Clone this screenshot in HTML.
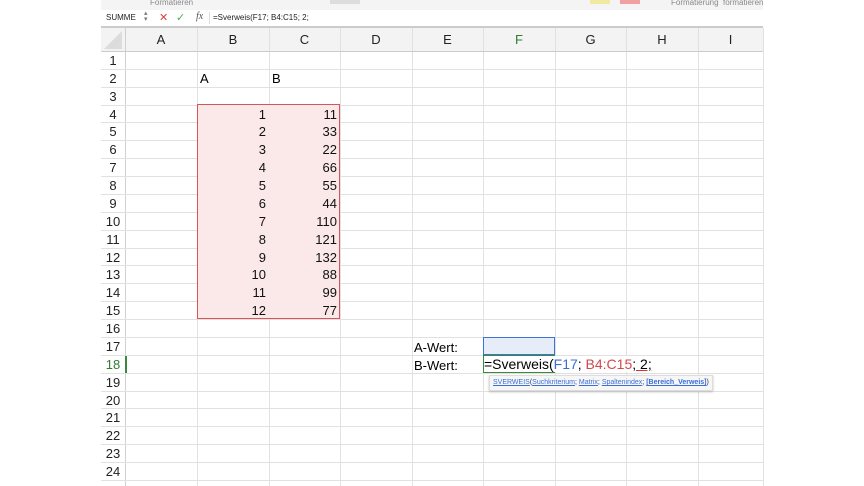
<!DOCTYPE html>
<html><head><meta charset="utf-8"><style>
body{margin:0;width:864px;height:486px;overflow:hidden;background:#fff;font-family:"Liberation Sans",sans-serif;position:relative}
.a{position:absolute}
.hl{position:absolute;height:1px;background:#e1e1e1}
.vl{position:absolute;width:1px;background:#e1e1e1}
.ch{position:absolute;top:28px;height:23px;line-height:24px;text-align:center;font-size:13px;color:#222}
.rh{position:absolute;left:101px;width:24px;text-align:center;font-size:13px;color:#222}
.n{position:absolute;text-align:right;font-size:13px;color:#111}
</style></head><body>
<div class="a" style="left:101px;top:0;width:662px;height:10px;background:#f4f4f4;border-bottom:1px solid #ddd"></div>
<div class="a" style="left:150px;top:-2px;font-size:8px;color:#888">Formatieren</div>
<div class="a" style="left:671px;top:-2px;font-size:8px;color:#888">Formatierung&nbsp; formatieren</div>
<div class="a" style="left:330px;top:0;width:30px;height:4px;background:#ddd"></div>
<div class="a" style="left:590px;top:0;width:20px;height:4px;background:#f2e9a0"></div>
<div class="a" style="left:620px;top:0;width:20px;height:4px;background:#f0a0a0"></div>
<div class="a" style="left:101px;top:10px;width:662px;height:16px;background:#fff"></div>
<div class="a" style="left:106px;top:13px;font-size:8px;color:#222">SUMME</div>
<div class="a" style="left:144px;top:11px;font-size:7px;color:#777;line-height:6px">▴<br>▾</div>
<div class="a" style="left:159px;top:11px;font-size:11px;color:#e04040">✕</div>
<div class="a" style="left:176px;top:11px;font-size:11px;color:#4cae4c">✓</div>
<div class="a" style="left:196px;top:11px;font-size:10px;font-style:italic;font-family:'Liberation Serif',serif;color:#555">fx</div>
<div class="a" style="left:209px;top:12px;width:1px;height:12px;background:#ddd"></div>
<div class="a" style="left:213px;top:13px;font-size:8px;color:#222">=Sverweis(F17; B4:C15; 2;</div>
<div class="a" style="left:101px;top:26px;width:662px;height:2px;background:#ccc"></div>
<div class="a" style="left:101px;top:28px;width:662px;height:23px;background:#f3f3f3"></div>
<div class="a" style="left:104px;top:31px;width:0;height:0;border-left:18px solid transparent;border-bottom:18px solid #dcdcdc"></div>
<div id="g"></div>
<div class="a" style="left:197px;top:104px;width:143px;height:215px;background:#fbe8e8;border:1px solid #d9535b;box-sizing:border-box"></div>
<div id="d"></div>
<div class="a" style="left:483px;top:337px;width:72px;height:18px;background:#e6ecf8;border:1px solid #3d73d6;box-sizing:border-box"></div>
<div class="a" style="left:483px;top:355px;width:72px;height:18px;border:1px solid #3a8a3a;box-sizing:border-box;background:#fff"></div>
<div class="a" style="left:414px;top:340px;font-size:13px">A-Wert:</div>
<div class="a" style="left:414px;top:358px;font-size:13px">B-Wert:</div>
<div class="a" style="left:484px;top:356px;font-size:14px;background:#fff;white-space:nowrap">=Sverweis(<span style="color:#3b6fd0">F17</span>; <span style="color:#d2474d">B4:C15</span><span style="text-decoration:underline;text-decoration-color:#e03030">; 2;</span></div>
<div class="a" style="left:489px;top:375px;height:14px;line-height:14px;padding:0 3px;font-size:7px;background:#f6f6f6;border:1px solid #ddd;box-shadow:0 1px 2px #bbb;color:#333;white-space:nowrap"><u style="color:#3a6fd8">SVERWEIS</u>(<u style="color:#3a6fd8">Suchkriterium</u>; <u style="color:#3a6fd8">Matrix</u>; <u style="color:#3a6fd8">Spaltenindex</u>; <b><u style="color:#3a6fd8">[Bereich_Verweis]</u></b>)</div>
<script>
var g='',cols=[125,197,269,340,412,483,555,626,698,763],L='ABCDEFGHI';
for(var i=0;i<9;i++){g+='<div class="ch" style="left:'+cols[i]+'px;width:'+(cols[i+1]-cols[i])+'px;'+(i==5?'color:#2e7d32;':'')+'">'+L[i]+'</div>';}
for(i=0;i<10;i++)g+='<div class="vl" style="left:'+(i==9?763:cols[i])+'px;top:28px;height:458px;'+(i==0?'background:#d0d0d0':'')+'"></div>';
g+='<div class="hl" style="left:101px;top:51px;width:662px;background:#ccc"></div>';
for(var r=1;r<=24;r++){var t=51+(r-1)*17.87;
g+='<div class="rh" style="top:'+(t+1)+'px;line-height:17px;'+(r==18?'color:#2e7d32':'')+'">'+r+'</div>';
g+='<div class="hl" style="left:101px;top:'+Math.round(t+17.87)+'px;width:662px"></div>';}
g+='<div class="a" style="left:125px;top:356px;width:2px;height:17px;background:#3a8a3a"></div>';
document.getElementById('g').innerHTML=g;
var a=[11,33,22,66,55,44,110,121,132,88,99,77],d='';
for(i=0;i<12;i++){var t=51+(3+i)*17.87+1;
d+='<div class="n" style="left:197px;width:69px;top:'+t+'px;line-height:17px">'+(i+1)+'</div>';
d+='<div class="n" style="left:269px;width:68px;top:'+t+'px;line-height:17px">'+a[i]+'</div>';}
d+='<div class="a" style="left:200px;top:'+(51+17.87+1)+'px;line-height:17px;font-size:13px">A</div>';
d+='<div class="a" style="left:272px;top:'+(51+17.87+1)+'px;line-height:17px;font-size:13px">B</div>';
document.getElementById('d').innerHTML=d;
</script>
</body></html>
